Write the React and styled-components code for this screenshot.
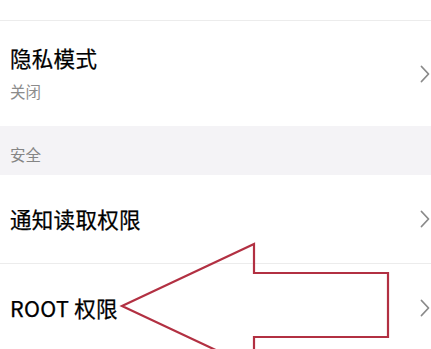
import React from "react";
import styled, { createGlobalStyle } from "styled-components";

const Global = createGlobalStyle`
  html, body { margin: 0; padding: 0; background: #fff; }
  body { font-family: "Noto Sans CJK SC", "Noto Sans", sans-serif; overflow: hidden; }
`;

const Page = styled.div`
  position: relative;
  width: 431px;
  height: 349px;
  overflow: hidden;
  background: #fff;
`;

const TopGap = styled.div`
  height: 20px;
  border-bottom: 1px solid #ececec;
`;

const Row = styled.div`
  display: flex;
  align-items: center;
  justify-content: space-between;
  height: ${(p) => p.$h}px;
  padding: 0 1px 0 10px;
  box-sizing: border-box;
  border-bottom: ${(p) => (p.$divider ? "1px solid #ececec" : "none")};
  background: #fff;
`;

const TextCol = styled.div`
  display: flex;
  flex-direction: column;
  gap: ${(p) => p.$gap || 0}px;
  margin-top: ${(p) => p.$shift || 0}px;
`;

const Title = styled.div`
  font-size: 21.5px;
  line-height: 28px;
  color: #000;
  font-weight: 400;
  letter-spacing: 0.3px;
  -webkit-text-stroke: 0.25px #000;
`;

const Sub = styled.div`
  font-size: 15.5px;
  line-height: 20px;
  color: #8c8c8c;
`;

const SectionHeader = styled.div`
  height: 49px;
  box-sizing: border-box;
  padding: 18px 10px 0;
  background: #f4f3f6;
  font-size: 15.5px;
  line-height: 20px;
  color: #858585;
`;

const Chevron = () => (
  <svg width="10" height="18" viewBox="0 0 10 18" fill="none">
    <path d="M1.5 1.5 L8.5 9 L1.5 16.5" stroke="#8a8a8a" strokeWidth="1.8" strokeLinecap="round" strokeLinejoin="round" />
  </svg>
);

const ArrowLayer = styled.svg`
  position: absolute;
  left: 0;
  top: 0;
  pointer-events: none;
`;

export default function App() {
  return (
    <Page>
      <Global />
      <TopGap />
      <Row $h={105}>
        <TextCol $gap={9} $shift={-2}>
          <Title>隐私模式</Title>
          <Sub>关闭</Sub>
        </TextCol>
        <Chevron />
      </Row>
      <SectionHeader>安全</SectionHeader>
      <Row $h={89} $divider>
        <Title>通知读取权限</Title>
        <Chevron />
      </Row>
      <Row $h={88}>
        <Title>ROOT 权限</Title>
        <Chevron />
      </Row>
      <ArrowLayer width="431" height="349" viewBox="0 0 431 349">
        <polygon
          points="122,306 254,244 254,273 388,273 388,337 254,337 254,368"
          fill="none"
          stroke="#b23042"
          strokeWidth="2.2"
          strokeLinejoin="miter"
        />
      </ArrowLayer>
    </Page>
  );
}
